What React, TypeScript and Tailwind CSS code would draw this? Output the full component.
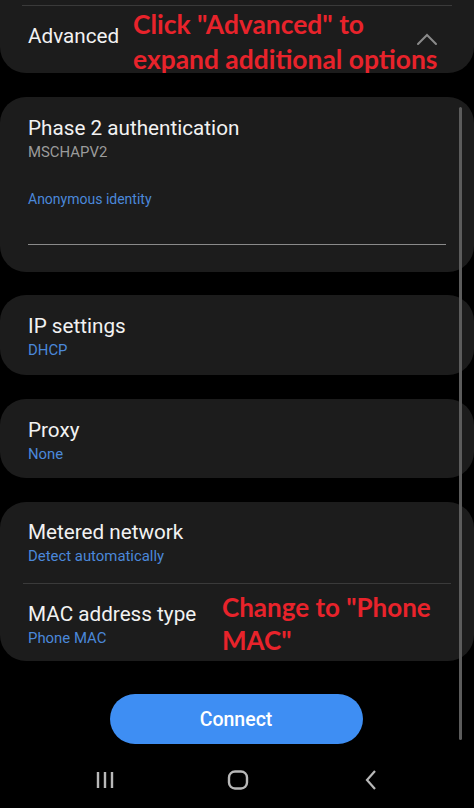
import React from "react";

const roboto = { fontFamily: "Roboto, 'Noto Sans', sans-serif" };

function Row({ title, sub, subClass = "text-[#4b88da]" }: { title: string; sub: string; subClass?: string }) {
  return (
    <div className="flex flex-col px-[28px]">
      <div className="text-[20.7px] leading-[26px] text-[#f2f2f2]">{title}</div>
      <div className={`text-[14.9px] leading-[22px] ${subClass}`}>{sub}</div>
    </div>
  );
}

export default function App() {
  return (
    <div className="relative w-[474px] h-[808px] bg-black overflow-hidden" style={roboto}>
      {/* Advanced card */}
      <div className="h-[73px] bg-[#1c1c1c] rounded-b-[26px] pt-[5px] flex flex-col">
        <div className="mx-[22px] h-px bg-[#3a3a3a]" />
        <div className="flex items-center justify-between pl-[28px] pr-[36px] mt-[17px]">
          <div className="text-[20.7px] leading-[26px] text-[#f2f2f2]">Advanced</div>
          <svg width="22" height="14" viewBox="0 0 22 14" className="mt-[5px]">
            <path d="M2 12 L11 3 L20 12" fill="none" stroke="#8a8a8a" strokeWidth="2" strokeLinecap="round" />
          </svg>
        </div>
      </div>

      {/* Phase 2 card */}
      <div className="mt-[24px] h-[175px] bg-[#1c1c1c] rounded-[26px] pt-[18px] flex flex-col">
        <Row title="Phase 2 authentication" sub="MSCHAPV2" subClass="text-[#9b9b9b]" />
        <div className="px-[28px] mt-[26px] text-[14px] leading-[20px] text-[#4b88da]">Anonymous identity</div>
        <div className="mx-[28px] mt-[35px] h-px bg-[#8a8a8a]" />
      </div>

      {/* IP settings */}
      <div className="mt-[23px] h-[80px] bg-[#1c1c1c] rounded-[26px] pt-[18px]">
        <Row title="IP settings" sub="DHCP" />
      </div>

      {/* Proxy */}
      <div className="mt-[24px] h-[79px] bg-[#1c1c1c] rounded-[26px] pt-[18px]">
        <Row title="Proxy" sub="None" />
      </div>

      {/* Metered + MAC */}
      <div className="mt-[24px] h-[159px] bg-[#1c1c1c] rounded-[26px] pt-[17px] flex flex-col">
        <Row title="Metered network" sub="Detect automatically" />
        <div className="mx-[23px] mt-[16px] h-px bg-[#3a3a3a]" />
        <div className="mt-[17px]">
          <Row title="MAC address type" sub="Phone MAC" />
        </div>
      </div>

      {/* Connect */}
      <div className="mt-[33px] flex justify-center pr-[1px]">
        <button className="w-[253px] h-[50px] rounded-full bg-[#3e8ef3] text-white text-[19.5px] font-medium -ml-[1px] pt-[1px]">
          Connect
        </button>
      </div>

      {/* Nav bar */}
      <div className="mt-[26px] flex items-center h-[20px]">
        <div className="w-[95px]" />
        <svg width="20" height="20" viewBox="0 0 20 20">
          <path d="M3 2 V18 M10 2 V18 M17 2 V18" stroke="#b8b8b8" strokeWidth="2.4" />
        </svg>
        <div className="w-[112px]" />
        <svg width="22" height="20" viewBox="0 0 22 20">
          <rect x="2" y="1.5" width="18" height="17" rx="6" fill="none" stroke="#b8b8b8" strokeWidth="2.4" />
        </svg>
        <div className="w-[115px]" />
        <svg width="14" height="22" viewBox="0 0 14 22">
          <path d="M11 2 L3 11 L11 20" fill="none" stroke="#b8b8b8" strokeWidth="2.2" />
        </svg>
      </div>

      {/* scrollbar */}
      <div className="absolute left-[459px] top-[107px] w-[3px] h-[633px] rounded-full bg-[#5c5c5c]" />

      {/* annotations */}
      <div
        className="absolute left-[133px] top-[7px] text-[26.4px] leading-[35px] font-bold text-[#e8232b]"
        style={{ fontFamily: "Lato, 'Open Sans', sans-serif" }}
      >
        <div>Click "Advanced" to</div>
        <div>expand additional options</div>
      </div>
      <div
        className="absolute left-[222px] top-[591px] text-[26px] leading-[33px] font-bold text-[#e8232b]"
        style={{ fontFamily: "Lato, 'Open Sans', sans-serif" }}
      >
        <div>Change to "Phone</div>
        <div>MAC"</div>
      </div>
    </div>
  );
}
